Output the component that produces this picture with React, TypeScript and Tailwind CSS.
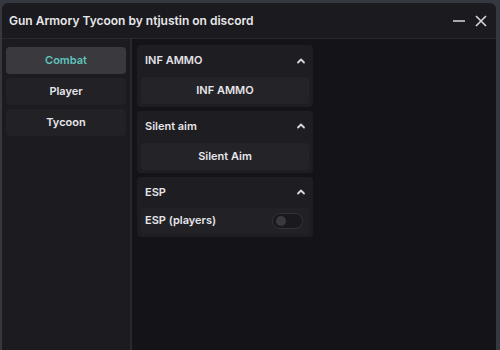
import React, { useState } from 'react';

const font = { fontFamily: 'Inter, "Noto Sans", sans-serif' };

function Chevron() {
  return (
    <svg width="10" height="10" viewBox="0 0 10 10" className="text-[#d8d8dc]">
      <path d="M2 6.5 L5 3.5 L8 6.5" fill="none" stroke="currentColor" strokeWidth="1.8" strokeLinecap="round" strokeLinejoin="round" />
    </svg>
  );
}

function Section({ title, children }: { title: string; children: React.ReactNode }) {
  return (
    <div className="w-[176px] rounded-[4px] bg-[#1e1d22] px-[4px] pb-[3px]">
      <div className="flex h-[31px] items-center justify-between pl-[4px] pr-[3px]">
        <span className="text-[11px] font-semibold text-[#e4e4e8]">{title}</span>
        <Chevron />
      </div>
      {children}
    </div>
  );
}

export default function App() {
  const [tab, setTab] = useState('Combat');
  const [esp, setEsp] = useState(false);
  const tabs = ['Combat', 'Player', 'Tycoon'];

  return (
    <div className="h-[350px] w-[500px] overflow-hidden bg-[#34383f] pl-[2px] pr-[4px] pt-[3px]" style={font}>
      <div className="flex h-[347px] flex-col overflow-hidden rounded-t-[6px] bg-[#1b1a1e]">
        {/* Title bar */}
        <div className="flex h-[36px] items-center justify-between border-b border-[#2a292e] pl-[7px] pr-[8px]">
          <span className="text-[12px] font-semibold text-[#e8e8ea]">
            Gun Armory Tycoon by ntjustin on discord
          </span>
          <div className="flex items-center gap-[8px] text-[#d8d8dc]">
            <svg width="14" height="14" viewBox="0 0 14 14">
              <path d="M1 7 H13" stroke="currentColor" strokeWidth="1.6" />
            </svg>
            <svg width="14" height="14" viewBox="0 0 14 14">
              <path d="M2 2 L12 12 M12 2 L2 12" stroke="currentColor" strokeWidth="1.6" />
            </svg>
          </div>
        </div>

        <div className="flex flex-1">
          {/* Sidebar */}
          <div className="flex w-[130px] flex-col gap-[4px] border-r-2 border-[#2a292e] bg-[#1c1b20] px-[4px] pt-[8px]">
            {tabs.map((t) => (
              <button
                key={t}
                onClick={() => setTab(t)}
                className={
                  t === tab
                    ? 'h-[27px] rounded-[4px] bg-[#3a393e] text-[11px] font-semibold text-[#5fc4bd]'
                    : 'h-[27px] rounded-[4px] bg-[#222126] text-[11px] font-semibold text-[#e6e6ea]'
                }
              >
                {t}
              </button>
            ))}
          </div>

          {/* Content */}
          <div className="flex flex-1 flex-col gap-[4px] bg-[#141318] pl-[5px] pt-[6px]">
            <Section title="INF AMMO">
              <button className="h-[27px] w-full rounded-[3px] bg-[#242328] text-[11px] font-semibold text-[#e6e6ea]">
                INF AMMO
              </button>
            </Section>
            <Section title="Silent aim">
              <button className="h-[27px] w-full rounded-[3px] bg-[#242328] text-[11px] font-semibold text-[#e6e6ea]">
                Silent Aim
              </button>
            </Section>
            <Section title="ESP">
              <div className="flex h-[26px] items-center justify-between rounded-[3px] bg-[#222126] pl-[4px] pr-[6px]">
                <span className="text-[11px] font-semibold text-[#e6e6ea]">ESP (players)</span>
                <button
                  onClick={() => setEsp(!esp)}
                  className="flex h-[16px] w-[31px] items-center rounded-full border border-[#333238] bg-[#1a191e] px-[3px]"
                >
                  <span className={esp ? 'ml-auto h-[10px] w-[10px] rounded-full bg-[#5fc4bd]' : 'h-[10px] w-[10px] rounded-full bg-[#3a393f]'} />
                </button>
              </div>
            </Section>
          </div>
        </div>
      </div>
    </div>
  );
}
